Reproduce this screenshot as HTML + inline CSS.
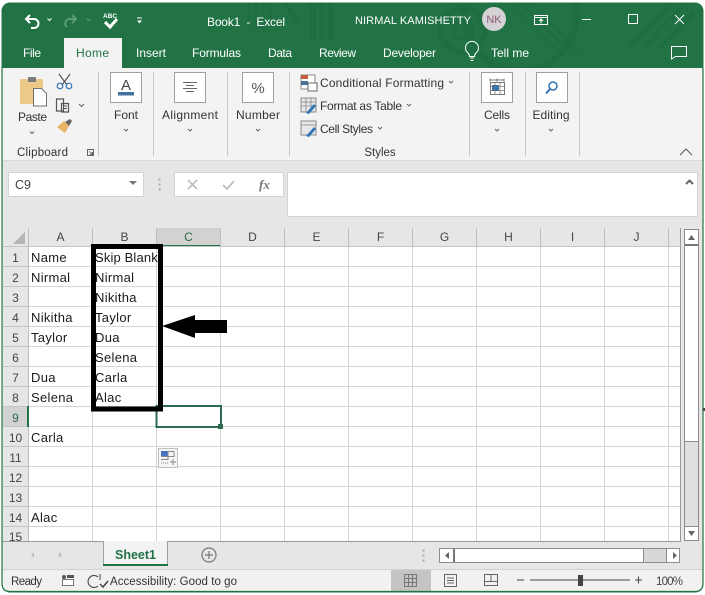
<!DOCTYPE html>
<html><head><meta charset="utf-8"><style>
html,body{margin:0;padding:0;background:#fff;width:705px;height:595px;overflow:hidden}
svg{display:block}
text{font-family:"Liberation Sans",sans-serif;white-space:pre}
.w{fill:#fff;font-size:12px}
.r{fill:#333;font-size:12px}
.c{fill:#1a1a1a;font-size:13px;letter-spacing:.3px}
.h{fill:#444;font-size:12px;text-anchor:middle}
.m{text-anchor:middle}
</style></head><body>
<svg width="705" height="595" viewBox="0 0 705 595" xmlns="http://www.w3.org/2000/svg">
<defs><clipPath id="tb"><path d="M2 68V12Q2 3 11 3H694Q703 3 703 12V68Z"/></clipPath></defs>
<!-- window -->
<rect x="2" y="3" width="701" height="589" rx="8" fill="#e6e6e6" stroke="#217346" stroke-width="1"/>
<path d="M2 68V12Q2 3 11 3H694Q703 3 703 12V68Z" fill="#217346"/>
<!-- pattern -->
<g clip-path="url(#tb)" fill="none" stroke="#1f6d42">
<path d="M249 3v22M256 3v26M263 3v30M270 3v22" stroke-width="3"/>
<path d="M313 3v38M322 3v38M331 3v38" stroke-width="6"/>
<path d="M285 3l14 22" stroke-width="5"/>
<circle cx="463" cy="30" r="9" stroke-width="5"/>
<circle cx="463" cy="30" r="22" stroke-width="6"/>
<circle cx="520" cy="15" r="56" stroke-width="7"/>
<path d="M510 3l52 52M520 3l52 52M530 3l52 52" stroke-width="2"/>
<path d="M630 48l42-45M643 48l42-45M660 48l34-36" stroke-width="4"/>
</g>
<!-- active tab -->
<rect x="64" y="38" width="58" height="30" fill="#f3f3f3"/>
<!-- QAT -->
<g fill="none" stroke="#fff" stroke-width="2">
<path d="M30 15l-4 4 4 4M26 19h8a4.500 4.500 0 0 1 0 9h-3"/>
<path d="M72 15l4 4-4 4M76 19h-7a4.500 4.500 0 0 0 -2 8" stroke="#5a9a78"/>
<path d="M105 22l5 5 7-8" stroke-width="3"/>
<path d="M47.500 18.500l2 2 2-2" stroke-width="1"/>
<path d="M86.500 18.500l2 2 2-2" stroke-width="1" stroke="#5a9a78"/>
<path d="M137 18h5" stroke-width="1"/>
</g>
<path d="M137 20.500h5l-2.500 3z" fill="#fff"/>
<text x="103" y="18" style="font-size:6.500px;font-weight:bold" fill="#fff">ABC</text>
<text class="w" x="207" y="26" textLength="78">Book1  -  Excel</text>
<text class="w" x="355" y="24" textLength="116" style="font-size:11px">NIRMAL KAMISHETTY</text>
<circle cx="494" cy="19" r="12" fill="#d5d2d5"/>
<text x="494" y="23" class="m" style="font-size:11px" fill="#8b5a78">NK</text>
<g fill="none" stroke="#fff" stroke-width="1">
<path d="M534.500 15.500h13v9h-13zM534.500 17.500h13M541 23.500v-4M539 21l2-2 2 2"/>
<path d="M582 19.500h9"/>
<rect x="628.500" y="14.500" width="9" height="9"/>
<path d="M675 15l9 9M684 15l-9 9"/>
<path d="M468 53a6.500 6.500 0 1 1 8 0c-1 1-1.500 2-1.500 3.500h-5c0-1.500-.5-2.500-1.500-3.500zM470 58h4M470.500 60.500h3"/>
<path d="M671.500 46.500h15v10h-11l-4 2.500z"/>
</g>
<!-- tabs -->
<text class="w" x="23" y="57" textLength="18">File</text>
<text x="76" y="57" textLength="33" style="font-size:12px" fill="#217346">Home</text>
<text class="w" x="136" y="57" textLength="30">Insert</text>
<text class="w" x="192" y="57" textLength="49">Formulas</text>
<text class="w" x="268" y="57" textLength="24">Data</text>
<text class="w" x="319" y="57" textLength="37">Review</text>
<text class="w" x="383" y="57" textLength="53">Developer</text>
<text class="w" x="491" y="57" textLength="38">Tell me</text>
<!-- ribbon -->
<rect x="3" y="68" width="699" height="92" fill="#f3f3f3"/>
<rect x="3" y="160" width="699" height="1" fill="#d8d8d8"/>
<path d="M98.500 72v84M153.500 72v84M227.500 72v84M289.500 72v84M469.500 72v84M525.500 72v84M579.500 72v84" stroke="#c8c8c8"/>
<!-- clipboard -->
<rect x="20" y="79" width="23" height="25" rx="1" fill="#edc987"/>
<rect x="28" y="77" width="8" height="5" rx="1" fill="#7a7a7a"/>
<path d="M33.500 88.500h8l5 5v12.500h-13z" fill="#fff" stroke="#707070"/>
<g fill="none" stroke-width="1.200">
<path d="M59 74l8 11M70 74l-8 11" stroke="#555"/>
<circle cx="60" cy="86" r="2.800" stroke="#2e75b6"/><circle cx="69" cy="86" r="2.800" stroke="#2e75b6"/>
<path d="M56.500 99h7v12h-7zM61.500 103.500h7v8.500h-7z" fill="#f3f3f3" stroke="#555"/>
<path d="M63 106h4M63 108.500h4" stroke="#555" stroke-width="1"/>
</g>
<path d="M57 127l7-6 5 5-4 7-3-2z" fill="#e8b765"/><path d="M65 122l5-3 2 2-3 5z" fill="#666"/>
<path d="M79 104l2.500 2.500 2.500-2.500M30 131.500l2 2 2-2M124 129l2 2 2-2M188 129l2 2 2-2M256 129l2 2 2-2M495 129l2 2 2-2M549 129l2 2 2-2" fill="none" stroke="#666"/>
<text x="18" y="121" textLength="29" style="font-size:12px" fill="#333">Paste</text>
<text x="17" y="156" textLength="51" style="font-size:11.500px" fill="#333">Clipboard</text>
<path d="M87.500 149.500h6v6h-6zM89.500 151.500l3 3M92.500 152v2.500h-2.500" fill="none" stroke="#666"/>
<!-- boxes -->
<g fill="#fff" stroke="#a0a0a0"><rect x="110.500" y="72.500" width="31" height="30"/><rect x="174.500" y="72.500" width="31" height="30"/><rect x="242.500" y="72.500" width="31" height="30"/><rect x="481.500" y="72.500" width="31" height="30"/><rect x="536.500" y="72.500" width="31" height="30"/></g>
<text x="126" y="90" class="m" style="font-size:15px" fill="#444">A</text>
<rect x="118" y="92" width="16" height="3.500" fill="#44729d"/>
<path d="M183 82.500h14M186 85.500h8M183 88.500h14M186 91.500h8" stroke="#666"/>
<text x="258" y="93" class="m" style="font-size:15px" fill="#555">%</text>
<text x="126" y="119" class="m r">Font</text>
<text x="190" y="119" class="m r" textLength="56">Alignment</text>
<text x="258" y="119" class="m r" textLength="44">Number</text>
<rect x="490.500" y="82.500" width="14" height="12" fill="#fff" stroke="#777"/>
<path d="M495 83v11M500 83v11M491 86.500h13M491 90.500h13" stroke="#999"/>
<rect x="492" y="85" width="7" height="6" fill="#44729d"/>
<path d="M490 80h14M490 78.500v3M504 78.500v3M497 78.500v3" stroke="#777" fill="none"/>
<circle cx="553" cy="86" r="4" fill="none" stroke="#2e75b6" stroke-width="1.500"/><path d="M550 89l-4 4.500" stroke="#2e75b6" stroke-width="2"/>
<text x="497" y="119" class="m r" textLength="26">Cells</text>
<text x="551" y="119" class="m r" textLength="37">Editing</text>
<!-- styles -->
<rect x="301" y="75" width="14" height="14" fill="#fff" stroke="#888"/>
<rect x="301" y="75" width="7" height="4" fill="#c0603a"/><rect x="301" y="81" width="7" height="4" fill="#44729d"/>
<rect x="308" y="83" width="9" height="8" fill="#fff" stroke="#666"/>
<rect x="301" y="98" width="15" height="14" fill="#e8e8ea" stroke="#888"/><path d="M301 102h15M301 106h15M306 98v14M311 98v14" stroke="#999"/>
<path d="M306 113l8-9 2 2-7 8z" fill="#2e75b6"/>
<rect x="301" y="121" width="15" height="14" fill="#e8e8ea" stroke="#888"/><path d="M301 125h15" stroke="#999"/>
<path d="M306 136l8-9 2 2-7 8z" fill="#2e75b6"/>
<text class="r" x="320" y="87" textLength="124">Conditional Formatting</text>
<text class="r" x="320" y="110" textLength="82">Format as Table</text>
<text class="r" x="320" y="133" textLength="53">Cell Styles</text>
<path d="M449 81l2 2 2-2M407 104l2 2 2-2M378 127l2 2 2-2" fill="none" stroke="#666"/>
<text x="380" y="156" class="m" style="font-size:11.500px" fill="#333">Styles</text>
<path d="M680 155l6-6 6 6" fill="none" stroke="#555"/>
<!-- formula bar -->
<rect x="8.500" y="172.500" width="135" height="24" fill="#fff" stroke="#d4d4d4"/>
<text x="15" y="189" style="font-size:12.500px" fill="#444">C9</text>
<path d="M129 181h8l-4 4z" fill="#777"/>
<path d="M159 179h1v1h-1zM159 184h1v1h-1zM159 189h1v1h-1z" stroke="#aaa"/>
<rect x="174.500" y="172.500" width="109" height="24" fill="#fff" stroke="#d4d4d4"/>
<path d="M188 180l9 9M197 180l-9 9M223 185l4 4 7-8" fill="none" stroke="#b5b5b5" stroke-width="1.500"/>
<text x="259" y="189" style="font-family:'Liberation Serif',serif;font-style:italic;font-weight:bold;font-size:13px" fill="#777">fx</text>
<rect x="287.500" y="172.500" width="410" height="44" fill="#fff" stroke="#d4d4d4"/>
<path d="M686 184l3.500-3.500 3.500 3.500" fill="none" stroke="#666" stroke-width="2"/>
<!-- grid -->
<rect x="3" y="228" width="678" height="313" fill="#e6e6e6"/>
<rect x="29" y="247" width="652" height="294" fill="#fff"/>
<rect x="157" y="228" width="64" height="18" fill="#d2d2d2"/>
<rect x="157" y="245" width="64" height="2" fill="#217346"/>
<path d="M25 232v12h-12z" fill="#b4b4b4"/>
<path d="M28.500 228v313M92.500 228v18M156.500 228v18M220.500 228v18M284.500 228v18M348.500 228v18M412.500 228v18M476.500 228v18M540.500 228v18M604.500 228v18M668.500 228v18" stroke="#bdbdbd"/>
<path d="M92.500 247v294M156.500 247v294M220.500 247v294M284.500 247v294M348.500 247v294M412.500 247v294M476.500 247v294M540.500 247v294M604.500 247v294M668.500 247v294M29 266.500h652M29 286.500h652M29 306.500h652M29 326.500h652M29 346.500h652M29 366.500h652M29 386.500h652M29 406.500h652M29 426.500h652M29 446.500h652M29 466.500h652M29 486.500h652M29 506.500h652M29 526.500h652" stroke="#d4d4d4"/>
<path d="M3 246.500h678M3 266.500h25M3 286.500h25M3 306.500h25M3 326.500h25M3 346.500h25M3 366.500h25M3 386.500h25M3 406.500h25M3 426.500h25M3 446.500h25M3 466.500h25M3 486.500h25M3 506.500h25M3 526.500h25" stroke="#c6c6c6"/>
<path d="M680.500 228v313" stroke="#9a9a9a"/>
<path d="M3 541.500h678" stroke="#9a9a9a"/>
<!-- col headers -->
<g class="h"><text class="h" x="60.500" y="241">A</text><text class="h" x="124.500" y="241">B</text><text class="h" x="188.500" y="241" style="fill:#2d6a4a">C</text><text class="h" x="252.500" y="241">D</text><text class="h" x="316.500" y="241">E</text><text class="h" x="380.500" y="241">F</text><text class="h" x="444.500" y="241">G</text><text class="h" x="508.500" y="241">H</text><text class="h" x="572.500" y="241">I</text><text class="h" x="636.500" y="241">J</text></g>
<!-- row headers -->
<rect x="3" y="407" width="25" height="19" fill="#d2d2d2"/><rect x="27" y="406" width="2" height="21" fill="#217346"/>
<text class="h" x="15.500" y="262">1</text><text class="h" x="15.500" y="282">2</text><text class="h" x="15.500" y="302">3</text><text class="h" x="15.500" y="322">4</text><text class="h" x="15.500" y="342">5</text><text class="h" x="15.500" y="362">6</text><text class="h" x="15.500" y="382">7</text><text class="h" x="15.500" y="402">8</text><text class="h" x="15.500" y="422" style="fill:#2d6a4a">9</text><text class="h" x="15.500" y="442">10</text><text class="h" x="15.500" y="462">11</text><text class="h" x="15.500" y="482">12</text><text class="h" x="15.500" y="502">13</text><text class="h" x="15.500" y="522">14</text><text class="h" x="15.500" y="541">15</text>
<!-- cells -->
<text class="c" x="31" y="262">Name</text><text class="c" x="31" y="282">Nirmal</text><text class="c" x="31" y="322">Nikitha</text><text class="c" x="31" y="342">Taylor</text><text class="c" x="31" y="382">Dua</text><text class="c" x="31" y="402">Selena</text><text class="c" x="31" y="442">Carla</text><text class="c" x="31" y="522">Alac</text>
<text class="c" x="95" y="262" textLength="63">Skip Blank</text><text class="c" x="95" y="282">Nirmal</text><text class="c" x="95" y="302">Nikitha</text><text class="c" x="95" y="322">Taylor</text><text class="c" x="95" y="342">Dua</text><text class="c" x="95" y="362">Selena</text><text class="c" x="95" y="382">Carla</text><text class="c" x="95" y="402">Alac</text>
<!-- selection -->
<rect x="156.500" y="406" width="64.500" height="21" fill="#fff" stroke="#2f6b4f" stroke-width="2"/>
<rect x="218" y="424" width="5" height="5" fill="#2f6b4f"/>
<!-- black box -->
<rect x="93.500" y="246.500" width="67" height="162.500" fill="none" stroke="#000" stroke-width="5"/>
<!-- arrow -->
<path d="M162 326l33-11v5h32v13h-32v5z" fill="#000"/>
<!-- paste options -->
<rect x="158.500" y="448.500" width="19" height="19" fill="#f5f5f5" stroke="#c0c0c0"/>
<rect x="161" y="451" width="7" height="5" fill="#4472c4"/>
<path d="M168 451.500h6v5h-6zM161 456.500h7v3h-7M170 462h6M173 459v6" fill="none" stroke="#888"/>
<path d="M161 463h7" stroke="#888" stroke-dasharray="1 1"/>
<!-- v scrollbar -->
<rect x="681" y="228" width="21" height="313" fill="#e6e6e6"/>
<rect x="684.500" y="229.500" width="14" height="311" fill="#fff" stroke="#8c8c8c"/>
<path d="M685 244.500h13M685 245.500h13" stroke="#777"/>
<path d="M685 441.500h13" stroke="#8c8c8c"/>
<rect x="685" y="442" width="13" height="84" fill="#e0e0e0"/>
<path d="M685 526.500h13" stroke="#8c8c8c"/>
<path d="M688 240l3.500-5 3.500 5z M688 531l3.500 5 3.500-5z" fill="#666"/>
<!-- sheet tabs -->
<rect x="3" y="542" width="699" height="27" fill="#e6e6e6"/>
<path d="M3 541.500h100" stroke="#9a9a9a"/><path d="M168 541.500h513" stroke="#9a9a9a"/>
<path d="M103.500 542v23.500M167.500 542v23.500" stroke="#a0a0a0"/>
<rect x="104" y="541" width="63" height="23" fill="#f3f3f3"/>
<rect x="103" y="564" width="65" height="2" fill="#217346"/>
<text x="135.500" y="559" class="m" style="font-size:12.500px;font-weight:bold" fill="#217346">Sheet1</text>
<path d="M34 552l-3 3 3 3z M59 552l3 3-3 3z" fill="#bdbdbd"/>
<circle cx="209" cy="555" r="7" fill="none" stroke="#777" stroke-width="1.200"/><path d="M205 555h8M209 551v8" stroke="#777" stroke-width="1.200"/>
<path d="M423 550h1v1h-1zM423 555h1v1h-1zM423 560h1v1h-1z" stroke="#aaa"/>
<!-- h scrollbar -->
<rect x="439.500" y="548.500" width="240" height="14" fill="#fff" stroke="#8c8c8c"/>
<path d="M453.500 549v13M454.500 549v13" stroke="#777"/>
<rect x="644" y="549" width="22" height="13" fill="#d8d8d8"/>
<path d="M643.500 549v13M666.500 549v13" stroke="#8c8c8c"/>
<path d="M449 552l-4 3.500 4 3.500zM673 552l4 3.500-4 3.500z" fill="#666"/>
<!-- status -->
<rect x="3" y="569" width="699" height="22" fill="#f1f1f1"/>
<path d="M3 569.500h699" stroke="#d0d0d0"/>
<rect x="391" y="570" width="40" height="21" fill="#c4c4c4"/>
<text x="11" y="585" textLength="31" style="font-size:11.500px" fill="#333">Ready</text>
<circle cx="64" cy="577" r="2" fill="#555"/><rect x="67" y="575" width="7" height="3" fill="#555"/>
<rect x="62.500" y="579.500" width="11" height="6" fill="#fff" stroke="#777"/>
<path d="M98 577a6 6 0 1 0 0 9M100 574v6" fill="none" stroke="#444"/>
<path d="M100 584l3 3 5-6" fill="none" stroke="#444" stroke-width="1.500"/>
<text x="110" y="585" textLength="127" style="font-size:11.500px" fill="#333">Accessibility: Good to go</text>
<path d="M404.500 574.500h12v12h-12zM408.500 574.500v12M412.500 574.500v12M404.500 578.500h12M404.500 582.500h12" fill="none" stroke="#777"/>
<path d="M444.500 574.500h12v12h-12zM447 578h7M447 580.500h7M447 583h7" fill="none" stroke="#666"/>
<path d="M484.500 574.500h13v11h-13zM484.500 581.500h13M491 574.500v7" fill="none" stroke="#666"/>
<path d="M517 580h7M530 580h100M635 580h7M638.500 576.500v7" stroke="#444"/>
<rect x="578" y="575" width="5" height="11" fill="#444"/>
<text x="656" y="585" textLength="27" style="font-size:11.500px" fill="#444">100%</text>
<!-- outer edge -->
<path d="M2 68V583Q2 591.500 10 591.500H695Q703 591.500 703 583V68" fill="none" stroke="#217346" stroke-width="1.200"/>
<rect x="703" y="408" width="2" height="3" fill="#444"/>
</svg>
</body></html>
